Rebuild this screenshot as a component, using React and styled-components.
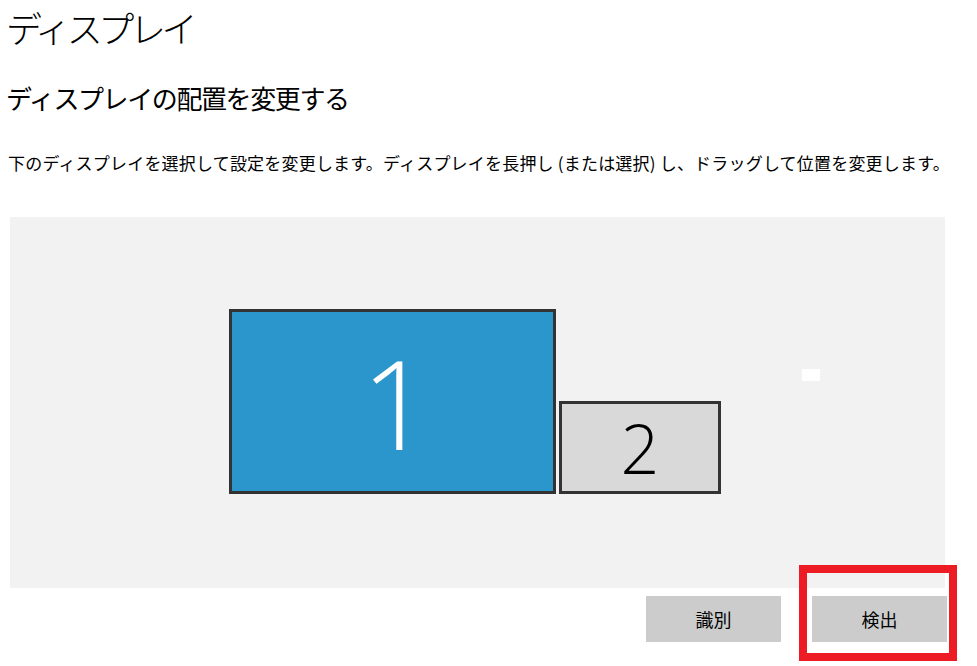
import React from "react";
import styled, { createGlobalStyle } from "styled-components";

const GlobalStyle = createGlobalStyle`
  body {
    margin: 0;
    background: #ffffff;
    font-family: "Noto Sans CJK JP", "Noto Sans", sans-serif;
    color: #000;
  }
`;

const Page = styled.div`
  width: 977px;
  height: 666px;
  overflow: hidden;
  display: flex;
  flex-direction: column;
`;

const Title = styled.h1`
  margin: 0;
  padding: 2px 0 0 6px;
  height: 48px;
  font-size: 36px;
  font-weight: 300;
  line-height: 50px;
  letter-spacing: -4.4px;
`;

const Subtitle = styled.h2`
  margin: 30px 0 0 6px;
  font-size: 26px;
  font-weight: 400;
  line-height: 36px;
  letter-spacing: -1.4px;
`;

const Description = styled.p`
  margin: 35px 0 0 8px;
  font-size: 17px;
  line-height: 24px;
  letter-spacing: 0.2px;
  white-space: nowrap;
`;

const Arrange = styled.div`
  margin: 42px 0 0 10px;
  width: 935px;
  height: 371px;
  background: #f2f2f2;
  display: flex;
  align-items: flex-start;
  padding: 92px 0 0 219px;
  box-sizing: border-box;
`;

const Monitor = styled.div`
  box-sizing: border-box;
  width: ${p => p.$w}px;
  height: ${p => p.$h}px;
  margin-top: ${p => p.$top || 0}px;
  margin-left: ${p => p.$left || 0}px;
  padding-left: ${p => p.$shift || 0}px;
  border: 3px solid #333333;
  background: ${p => (p.$primary ? "#2b96cc" : "#d9d9d9")};
  color: ${p => (p.$primary ? "#ffffff" : "#000000")};
  display: flex;
  align-items: center;
  justify-content: center;
  font-family: "Open Sans", "Lato", sans-serif;
  font-weight: 300;
  font-size: ${p => p.$size}px;
  line-height: 1;
`;

const Blip = styled.div`
  width: 18px;
  height: 12px;
  background: #ffffff;
  margin: 60px 0 0 81px;
`;

const Actions = styled.div`
  display: flex;
  justify-content: flex-end;
  gap: 31px;
  padding: 8px 30px 0 0;
`;

const ButtonWrap = styled.div`
  position: relative;
`;

const Button = styled.button`
  width: 135px;
  height: 46px;
  border: none;
  background: #cccccc;
  font-family: "Noto Sans CJK JP", "Noto Sans", sans-serif;
  font-size: 18px;
  color: #000;
  padding: 0;
  cursor: pointer;
`;

const Highlight = styled.div`
  position: absolute;
  left: -13px;
  top: -31px;
  width: 158px;
  height: 96px;
  box-sizing: border-box;
  border: 8px solid #ed1c24;
  pointer-events: none;
`;

export default function App() {
  return (
    <Page>
      <GlobalStyle />
      <Title>ディスプレイ</Title>
      <Subtitle>ディスプレイの配置を変更する</Subtitle>
      <Description>
        下のディスプレイを選択して設定を変更します。ディスプレイを長押し (または選択) し、ドラッグして位置を変更します。
      </Description>
      <Arrange>
        <Monitor $primary $w={327} $h={185} $size={124} $shift={8}>1</Monitor>
        <Monitor $w={162} $h={93} $top={92} $left={3} $size={68}>2</Monitor>
        <Blip />
      </Arrange>
      <Actions>
        <ButtonWrap>
          <Button>識別</Button>
        </ButtonWrap>
        <ButtonWrap>
          <Button>検出</Button>
          <Highlight />
        </ButtonWrap>
      </Actions>
    </Page>
  );
}
